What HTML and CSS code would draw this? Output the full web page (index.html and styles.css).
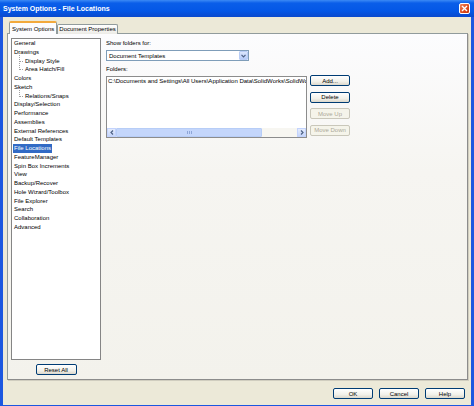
FILE: index.html
```html
<!DOCTYPE html>
<html lang="en">
<head>
    <meta charset="UTF-8">
    <title>System Options - File Locations</title>
    <link rel="stylesheet" href="styles.css">
</head>
<body>
    <div class="window">
        <div class="titlebar">
            <span>System Options - File Locations</span>
            <span class="close">
                <svg width="7" height="7" viewBox="0 0 7 7"><path d="M1 1L6 6M6 1L1 6" stroke="#fff" stroke-width="1.4"/></svg>
            </span>
        </div>
        <div class="client">
            <div class="tabs">
                <div class="tab active">System Options</div>
                <div class="tab">Document Properties</div>
            </div>
            <div class="panel">
                <div class="left-col">
                    <div class="tree">
                        <div class="node"><span>General</span></div>
                        <div class="node"><span>Drawings</span></div>
                        <div class="node child"><span>Display Style</span></div>
                        <div class="node child"><span>Area Hatch/Fill</span></div>
                        <div class="node"><span>Colors</span></div>
                        <div class="node"><span>Sketch</span></div>
                        <div class="node child"><span>Relations/Snaps</span></div>
                        <div class="node"><span>Display/Selection</span></div>
                        <div class="node"><span>Performance</span></div>
                        <div class="node"><span>Assemblies</span></div>
                        <div class="node"><span>External References</span></div>
                        <div class="node"><span>Default Templates</span></div>
                        <div class="node selected"><span>File Locations</span></div>
                        <div class="node"><span>FeatureManager</span></div>
                        <div class="node"><span>Spin Box Increments</span></div>
                        <div class="node"><span>View</span></div>
                        <div class="node"><span>Backup/Recover</span></div>
                        <div class="node"><span>Hole Wizard/Toolbox</span></div>
                        <div class="node"><span>File Explorer</span></div>
                        <div class="node"><span>Search</span></div>
                        <div class="node"><span>Collaboration</span></div>
                        <div class="node"><span>Advanced</span></div>
                    </div>
                    <button class="btn reset">Reset All</button>
                </div>
                <div class="opts">
                    <div class="label first">Show folders for:</div>
                    <div class="select">
                        <span>Document Templates</span>
                        <span class="drop">
                            <svg width="5" height="4" viewBox="0 0 5 4"><path d="M0.5 0.8L2.5 2.8L4.5 0.8" fill="none" stroke="#4d6185" stroke-width="1.2"/></svg>
                        </span>
                    </div>
                    <div class="label">Folders:</div>
                    <div class="folders-row">
                        <div class="folders">
                            <div class="paths">C:\Documents and Settings\All Users\Application Data\SolidWorks\SolidWor</div>
                            <div class="hscroll">
                                <span class="arrow">
                                    <svg width="4" height="5" viewBox="0 0 4 5"><path d="M3 0.5L1 2.5L3 4.5" fill="none" stroke="#4d6185" stroke-width="1.2"/></svg>
                                </span>
                                <span class="thumb"><i></i></span>
                                <span class="track"></span>
                                <span class="arrow">
                                    <svg width="4" height="5" viewBox="0 0 4 5"><path d="M1 0.5L3 2.5L1 4.5" fill="none" stroke="#4d6185" stroke-width="1.2"/></svg>
                                </span>
                            </div>
                        </div>
                        <div class="side-btns">
                            <button class="btn">Add...</button>
                            <button class="btn">Delete</button>
                            <button class="btn" disabled>Move Up</button>
                            <button class="btn" disabled>Move Down</button>
                        </div>
                    </div>
                </div>
            </div>
            <div class="footer">
                <button class="btn">OK</button>
                <button class="btn">Cancel</button>
                <button class="btn">Help</button>
            </div>
        </div>
    </div>
</body>
</html>
```

FILE: styles.css
```css
body {
    margin: 0;
    font-family: "Liberation Sans", Arial, sans-serif;
    font-size: 6px;
    color: #000;
}
.window {
    width: 474px;
    height: 406px;
    display: flex;
    flex-direction: column;
    background: #1c57e0;
}
.titlebar {
    height: 17px;
    flex: none;
    display: flex;
    align-items: center;
    justify-content: space-between;
    padding: 0 4px 0 3px;
    background: linear-gradient(#3c8af5, #0a5ee9 18%, #0457e6 65%, #0a49cc);
    color: #fff;
    font-weight: bold;
    font-size: 7px;
}
.close {
    width: 11px;
    height: 11px;
    box-sizing: border-box;
    border: 1px solid #fff;
    border-radius: 2px;
    background: linear-gradient(135deg, #f0865c, #dd4a1c 60%, #c6380e);
    display: flex;
    align-items: center;
    justify-content: center;
}
.client {
    flex: 1;
    margin: 0 3px 3px;
    background: #ece9d8;
    display: flex;
    flex-direction: column;
    padding: 4px 3px 6px 4px;
}
.tabs {
    height: 13px;
    display: flex;
    align-items: flex-end;
    margin: 0 0 -1px 2px;
    position: relative;
    z-index: 1;
}
.tab {
    height: 9px;
    line-height: 9px;
    padding: 0 1px;
    border: 1px solid #919b9c;
    border-bottom: none;
    border-radius: 2px 2px 0 0;
    background: linear-gradient(#fff, #ecebe6);
}
.tab.active {
    height: 11px;
    line-height: 12px;
    padding: 0 2px;
    border-top: 2px solid #f2a93c;
    background: #fcfcfe;
}
.panel {
    flex: 1;
    display: flex;
    gap: 5px;
    padding: 4px 3px;
    border: 1px solid #919b9c;
    border-right-color: #8c8c8c;
    border-bottom-color: #8c8c8c;
    background: linear-gradient(#fcfcfe, #f6f5f1 40%, #f3f2ec);
    box-shadow: 1px 1px 0 #d0cdbf;
}
.left-col {
    width: 90px;
    display: flex;
    flex-direction: column;
    align-items: center;
    gap: 4px;
}
.tree {
    width: 100%;
    height: 322px;
    box-sizing: border-box;
    border: 1px solid #858585;
    background: #fff;
    padding-left: 1px;
}
.node {
    position: relative;
    line-height: 8.75px;
    height: 8.75px;
}
.node span {
    padding: 0 1px;
}
.node.child {
    padding-left: 11px;
}
/* dotted connector in front of a child node */
.node.child::before {
    content: "";
    position: absolute;
    left: 6px;
    top: -4px;
    width: 3px;
    height: 8px;
    border-left: 1px dotted #a0a0a0;
    border-bottom: 1px dotted #a0a0a0;
}
.node.selected span {
    display: inline-block;
    height: 8.75px;
    background: #316ac5;
    color: #fff;
}
.btn {
    width: 40px;
    height: 11px;
    padding: 0;
    font-family: inherit;
    font-size: 6px;
    color: #000;
    border: 1px solid #003c74;
    border-radius: 2px;
    background: linear-gradient(#fff, #f2f1ea 60%, #dcd8cc);
}
.btn:disabled {
    color: #aca899;
    border-color: #c9c7ba;
    background: #f5f4ea;
}
.reset {
    width: 41px;
    flex: none;
}
.opts {
    display: flex;
    flex-direction: column;
}
.label {
    line-height: 8px;
    margin-top: 4px;
}
.label.first {
    margin-top: 1px;
}
.select {
    width: 143px;
    height: 11px;
    box-sizing: border-box;
    margin-top: 3px;
    border: 1px solid #7f9db9;
    background: #fff;
    display: flex;
    align-items: center;
    justify-content: space-between;
    padding-left: 2px;
}
.drop {
    width: 9px;
    height: 9px;
    box-sizing: border-box;
    border: 1px solid #b9cdf6;
    border-radius: 1px;
    background: linear-gradient(#dbe6fd, #b6cbf8);
    display: flex;
    align-items: center;
    justify-content: center;
}
.folders-row {
    display: flex;
    gap: 3px;
    margin-top: 3px;
}
.folders {
    width: 201px;
    height: 62px;
    box-sizing: border-box;
    border: 1px solid #8c8c8c;
    background: #fff;
    display: flex;
    flex-direction: column;
}
.paths {
    flex: 1;
    line-height: 8px;
    padding: 0 1px;
    white-space: nowrap;
    overflow: hidden;
}
.hscroll {
    height: 9px;
    display: flex;
    background: #f7f6f1;
}
.arrow {
    width: 9px;
    height: 9px;
    box-sizing: border-box;
    border: 1px solid #c3d3fd;
    background: linear-gradient(#e4ecfd, #c6d6fb);
    display: flex;
    align-items: center;
    justify-content: center;
}
.thumb {
    width: 146px;
    box-sizing: border-box;
    border: 1px solid #b7cdf7;
    border-radius: 1px;
    background: #c4d6fb;
    display: flex;
    align-items: center;
    justify-content: center;
}
.thumb i {
    width: 5px;
    height: 3px;
    background: repeating-linear-gradient(90deg, #8ea6d8 0 1px, transparent 1px 2px);
}
.track {
    flex: 1;
}
.side-btns {
    display: flex;
    flex-direction: column;
    gap: 5.5px;
    margin-top: -1px;
}
.footer {
    flex: none;
    margin-top: 8px;
    display: flex;
    justify-content: flex-end;
    gap: 6px;
    padding-right: 3px;
}
```
